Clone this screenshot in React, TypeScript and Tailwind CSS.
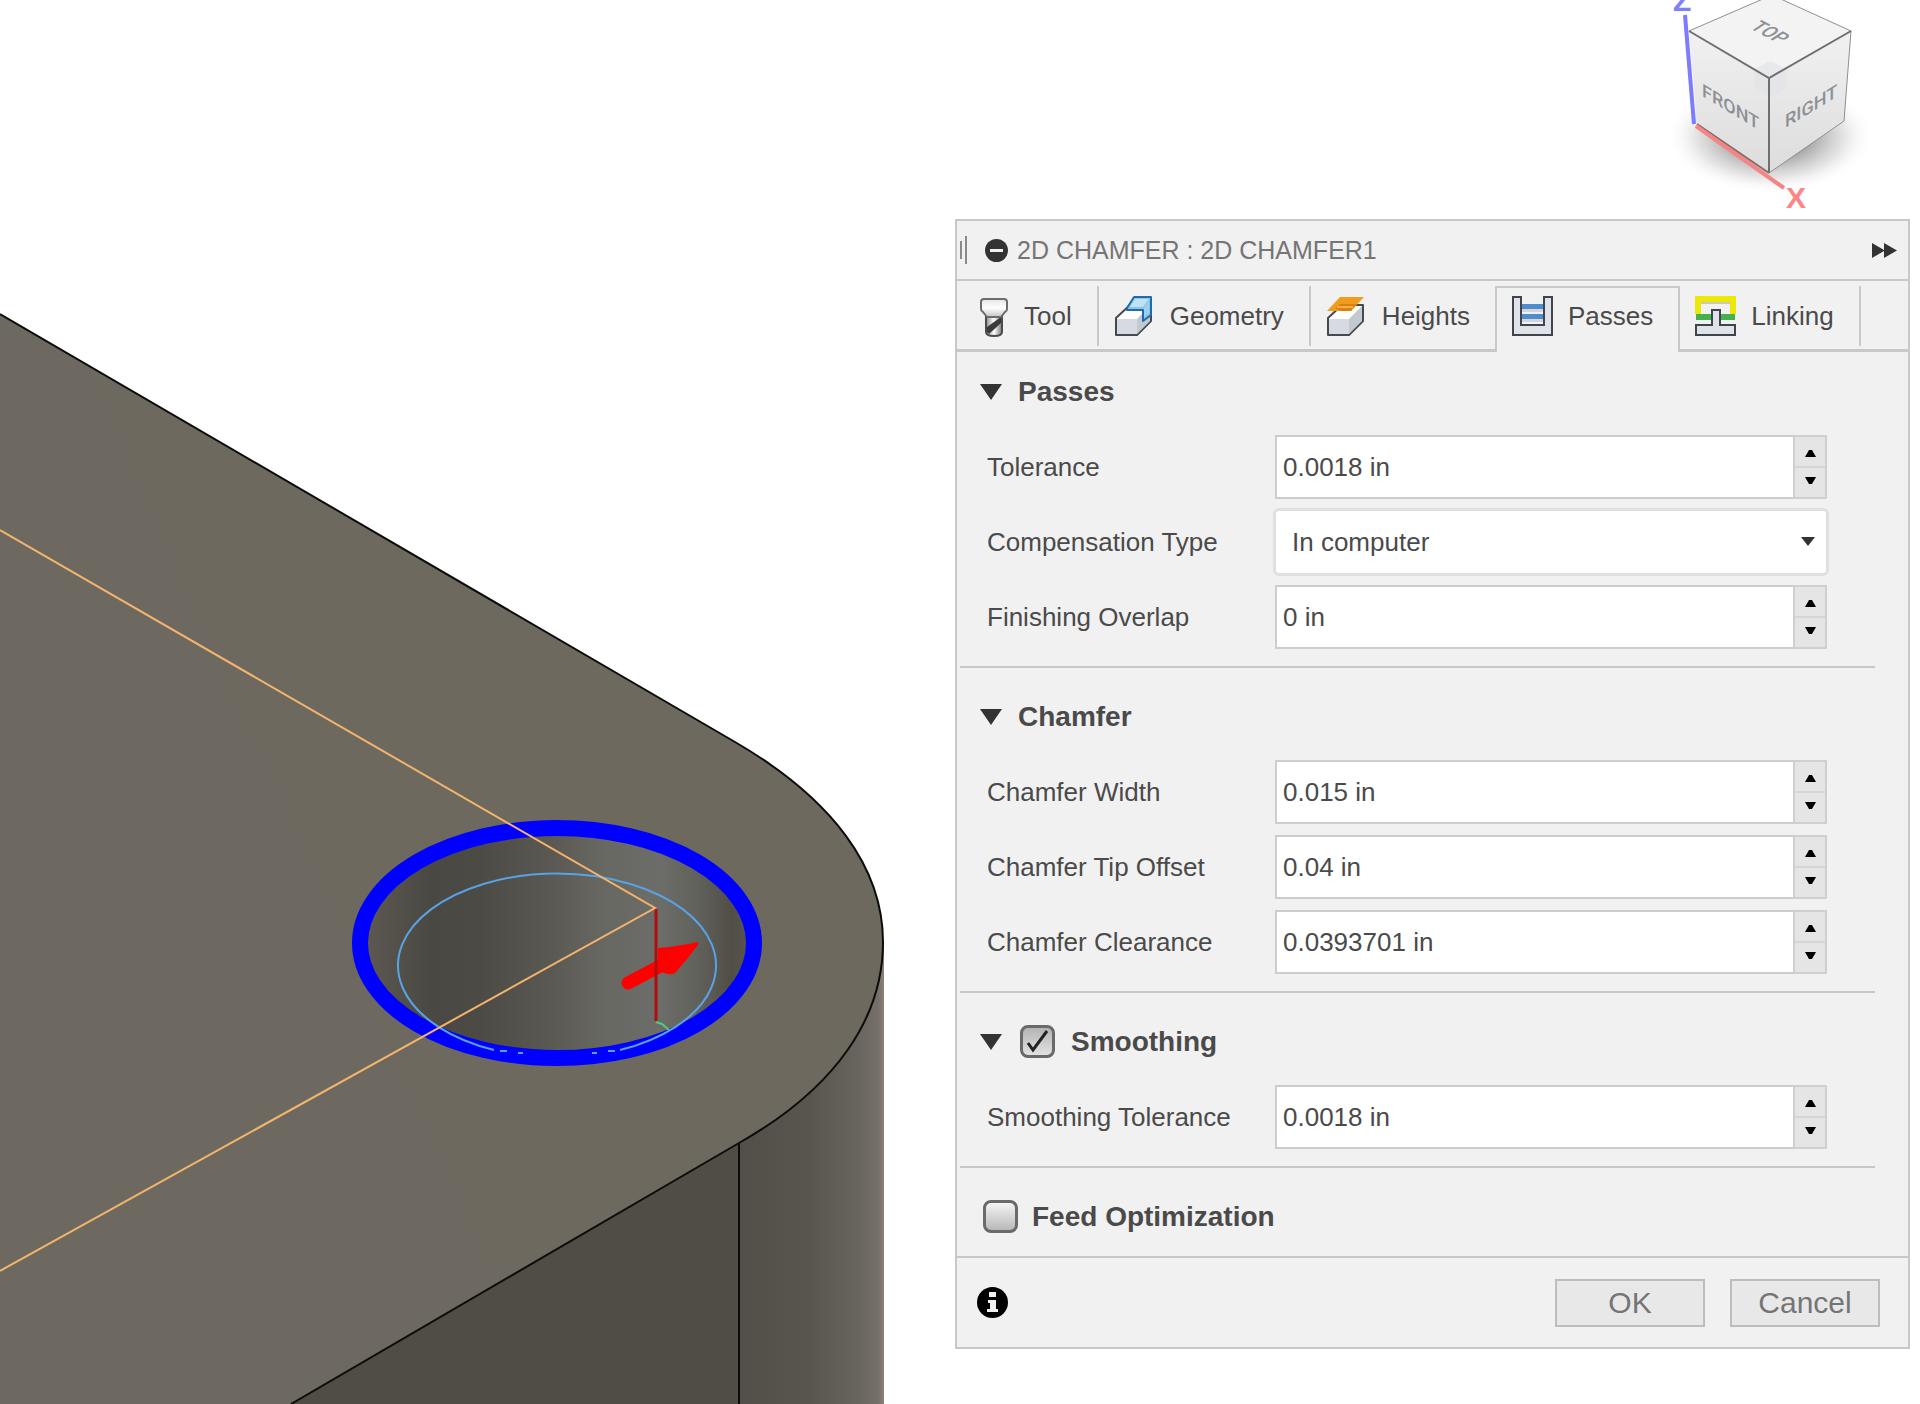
import React, { useState } from 'react';

type NumberRow = { id: string; label: string; value: string };

const PASSES_TOP: NumberRow = { id: 'tolerance', label: 'Tolerance', value: '0.0018 in' };
const PASSES_BOTTOM: NumberRow = { id: 'overlap', label: 'Finishing Overlap', value: '0 in' };

const CHAMFER_ROWS: NumberRow[] = [
  { id: 'width', label: 'Chamfer Width', value: '0.015 in' },
  { id: 'tip-offset', label: 'Chamfer Tip Offset', value: '0.04 in' },
  { id: 'clearance', label: 'Chamfer Clearance', value: '0.0393701 in' },
];

const SMOOTHING_ROW: NumberRow = { id: 'smoothing', label: 'Smoothing Tolerance', value: '0.0018 in' };

// ---------- tab icons, all on a 41x41 grid ----------

const ToolIcon = () => (
  <svg width="41" height="41" viewBox="0 0 41 41" fill="none">
    <defs>
      <linearGradient id="toolHead" x1="0" x2="0" y1="0" y2="1">
        <stop offset="0" stopColor="#e4e4e4" />
        <stop offset="0.5" stopColor="#ffffff" />
        <stop offset="1" stopColor="#c4c4c4" />
      </linearGradient>
      <linearGradient id="toolBody" x1="0" x2="1">
        <stop offset="0" stopColor="#8f8f8f" />
        <stop offset="0.5" stopColor="#ffffff" />
        <stop offset="1" stopColor="#7a7a7a" />
      </linearGradient>
    </defs>
    <path d="M18 19h16v17q0 4-8 4t-8-4z" fill="url(#toolBody)" stroke="#4b4b4b" strokeWidth="2" />
    <path d="M19 31L33 21v6L21 38l-2-2z" fill="#3b3b3b" />
    <path d="M16 3h20q3 0 3 3v7q0 2-2 3l-4 5H19l-4-5q-2-1-2-3V6q0-3 3-3z" fill="url(#toolHead)" stroke="#6c6c6c" strokeWidth="2" />
  </svg>
);

const BlockFaces = () => (
  <>
    <path d="M2 22L16 9h21v16L23 39H2z" fill="#ffffff" stroke="#454a52" strokeWidth="2" strokeLinejoin="round" />
    <path d="M3 23h20v15H3z" fill="#d7dbe1" />
    <path d="M23 23L36 10v15L23 38z" fill="#c3c9d1" />
    <path d="M4 23l13-12h14L20 23z" fill="#ffffff" />
  </>
);

const GeometryIcon = () => (
  <svg width="41" height="41" viewBox="0 0 41 41" fill="none">
    <BlockFaces />
    <path d="M13 12L20 1h17v18l-8 6V14H13z" fill="#8cc4e8" stroke="#1f6cab" strokeWidth="2" strokeLinejoin="round" />
    <path d="M16 11l5-8h14l-6 8z" fill="#bfe2f5" />
    <path d="M30 12l5-7v12l-5 4z" fill="#9fcfee" />
  </svg>
);

const HeightsIcon = () => (
  <svg width="41" height="41" viewBox="0 0 41 41" fill="none">
    <BlockFaces />
    <path d="M1 15L14 1h24L25 15z" fill="#f09c1c" />
    <path d="M9 12L14 8h17l-6 7h-10z" fill="#dd7f0b" />
    <path d="M11 11h16" stroke="#f5b04a" strokeWidth="2" />
  </svg>
);

const PassesIcon = () => (
  <svg width="41" height="41" viewBox="0 0 41 41" fill="none">
    <path d="M9 8h22v5H9zM9 18h22v5H9z" fill="#4f8ccb" />
    <path d="M9 13h22v3H9zM9 23h22v3H9z" fill="#d2d6dc" />
    <path d="M1 1h8v28h23V1h8v38H1z" fill="#dfe3e9" stroke="#3f444d" strokeWidth="2" />
  </svg>
);

const LinkingIcon = () => (
  <svg width="41" height="41" viewBox="0 0 41 41" fill="none">
    <path d="M3 18V3h35v15" stroke="#ece808" strokeWidth="6" />
    <path d="M6 7h29" stroke="#c9c9b4" strokeWidth="2" />
    <path d="M1 21h39" stroke="#45b04c" strokeWidth="6" />
    <path d="M1 39V29h16V14h8v15h15v10z" fill="#dfe3e9" stroke="#3f444d" strokeWidth="2" />
  </svg>
);

const TABS = [
  { name: 'Tool', icon: ToolIcon, box: 'pl-[11px]', inner: 'border-r-2' },
  { name: 'Geometry', icon: GeometryIcon, box: 'pl-[15px]', inner: 'border-r-2' },
  { name: 'Heights', icon: HeightsIcon, box: 'pl-[15px]', inner: '' },
  { name: 'Passes', icon: PassesIcon, box: 'pl-[15px]', inner: '' },
  { name: 'Linking', icon: LinkingIcon, box: 'pl-[15px]', inner: 'border-r-2' },
];

// ---------- form pieces ----------

const Disclosure = () => (
  <svg width="22" height="16" viewBox="0 0 22 16" className="shrink-0">
    <path d="M0 0h22L11 16z" fill="#333333" />
  </svg>
);

const NumberField = ({ row }: { row: NumberRow }) => {
  const [value, setValue] = useState(row.value);

  const nudge = (dir: number) => {
    const next = parseFloat(value) + dir * 0.001;
    if (!Number.isNaN(next)) setValue(`${+next.toFixed(7)} in`);
  };

  return (
    <div className="flex h-[75px] items-center pl-[30px] pr-[81px]">
      <label htmlFor={row.id} className="w-[288px] shrink-0">{row.label}</label>
      <div className="flex h-16 min-w-0 flex-1">
        <input
          id={row.id}
          type="text"
          value={value}
          onChange={(e) => setValue(e.target.value)}
          className="min-w-0 flex-1 border-2 border-r-0 border-[#cdcdcd] bg-white pl-[6px] outline-none"
        />
        <div className="flex w-[34px] flex-col border-2 border-[#cfcfcf] bg-[#e5e5e5]">
          <button aria-label={`Increase ${row.label}`} onClick={() => nudge(1)} className="flex flex-1 items-center justify-center border-b-2 border-[#d6d6d6] pt-1">
            <svg width="11" height="7" viewBox="0 0 11 7"><path d="M4 0h3l4 7H0z" fill="#000000" /></svg>
          </button>
          <button aria-label={`Decrease ${row.label}`} onClick={() => nudge(-1)} className="flex flex-1 items-center justify-center pb-1">
            <svg width="11" height="7" viewBox="0 0 11 7"><path d="M0 0h11L7 7H4z" fill="#000000" /></svg>
          </button>
        </div>
      </div>
    </div>
  );
};

const CheckBox = ({ id, checked, onChange }: { id: string; checked: boolean; onChange: (v: boolean) => void }) => (
  <span className="relative flex h-[33px] w-[35px] shrink-0">
    <input
      id={id}
      type="checkbox"
      checked={checked}
      onChange={(e) => onChange(e.target.checked)}
      className="h-full w-full appearance-none rounded-lg border-3 border-[#6a6a6a] bg-linear-to-b from-[#f4f4f4] to-[#b9b9b9] checked:from-[#b4b4b4] checked:to-[#e2e2e2]"
    />
    {checked && (
      <svg viewBox="0 0 35 33" className="pointer-events-none absolute inset-0" fill="none">
        <path d="M8 18l5 7L27 6" stroke="#222222" strokeWidth="3" />
      </svg>
    )}
  </span>
);

const Divider = () => <hr className="mt-3 mb-[11px] ml-[3px] mr-[33px] border-t-2 border-[#c8c8c8]" />;

const SectionTitle = ({ children }: { children: React.ReactNode }) => (
  <h2 className="flex h-[75px] items-center gap-4 pl-[23px] text-[28px] font-bold">
    <Disclosure />
    {children}
  </h2>
);

// ---------- 3D view ----------

const ModelView = () => (
  <svg viewBox="0 0 955 1404" className="block h-auto w-full" fill="none">
    <defs>
      <linearGradient id="sideRound" gradientUnits="userSpaceOnUse" x1="739" x2="885" y1="0" y2="0">
        <stop offset="0" stopColor="#524f48" />
        <stop offset="0.5" stopColor="#595650" />
        <stop offset="0.8" stopColor="#67645e" />
        <stop offset="0.95" stopColor="#756f67" />
        <stop offset="1" stopColor="#8d857b" />
      </linearGradient>
      <linearGradient id="topFace" gradientUnits="userSpaceOnUse" x1="100" x2="420" y1="760" y2="620">
        <stop offset="0" stopColor="#6d6961" />
        <stop offset="1" stopColor="#6d695e" />
      </linearGradient>
      <linearGradient id="bore" gradientUnits="userSpaceOnUse" x1="360" x2="755" y1="0" y2="0">
        <stop offset="0" stopColor="#5d5a53" />
        <stop offset="0.18" stopColor="#4a4842" />
        <stop offset="0.3" stopColor="#4c4a44" />
        <stop offset="0.48" stopColor="#5a5852" />
        <stop offset="0.62" stopColor="#686863" />
        <stop offset="0.76" stopColor="#6c6d68" />
        <stop offset="0.85" stopColor="#62625c" />
        <stop offset="0.94" stopColor="#504e47" />
        <stop offset="1" stopColor="#5a574f" />
      </linearGradient>
    </defs>

    {/* block */}
    <path d="M291 1404L739 1143V1404z" fill="#504d45" />
    <path d="M739 1143L884 940V1404H739z" fill="url(#sideRound)" />
    <path d="M0 314L735 742C833 799 883 868 883 942S838 1087 739 1143L291 1404H0z" fill="url(#topFace)" />
    <path d="M0 314L735 742C833 799 883 868 883 942S838 1087 739 1143L291 1404M739 1143V1404" stroke="#0c0c0a" strokeWidth="2" />

    {/* hole and the selected edge */}
    <ellipse cx="557" cy="943" rx="197" ry="115" fill="url(#bore)" stroke="#0000ff" strokeWidth="16" />
    <path d="M494 1050A159 92 0 1 1 620 1050" stroke="#57a3e6" strokeWidth="2" />
    <path d="M500 1051h7M518 1053h5M592 1053h5M608 1051h7" stroke="#57a3e6" strokeWidth="2" />

    {/* toolpath */}
    <path d="M628 983L662 965" stroke="#ff0000" strokeWidth="13" strokeLinecap="round" />
    <path d="M658 948Q680 946 697 942Q700 943 697 946Q687 960 675 973Q671 976 658 971z" fill="#ff0000" />
    <path d="M656 909V1021" stroke="#b00d12" strokeWidth="3" />
    <path d="M656 1022l6 2 7 6" stroke="#56c877" strokeWidth="2" />
    <path d="M0 530L655 908L0 1271" stroke="#f5b46c" strokeWidth="2" />
  </svg>
);

const ViewCube = () => (
  <svg width="220" height="219" viewBox="0 0 220 219" className="mr-[30px] self-end" role="img" aria-label="View cube">
    <defs>
      <radialGradient id="cubeShadow">
        <stop offset="0.3" stopColor="#8f8f8f" />
        <stop offset="0.7" stopColor="#cfcfcf" stopOpacity="0.6" />
        <stop offset="1" stopColor="#ffffff" stopOpacity="0" />
      </radialGradient>
      <linearGradient id="cubeSide" x1="0" x2="0" y1="0" y2="1">
        <stop offset="0" stopColor="#f1f1f1" />
        <stop offset="1" stopColor="#dcdcdc" />
      </linearGradient>
    </defs>
    <ellipse cx="110" cy="136" rx="104" ry="58" fill="url(#cubeShadow)" />
    <path d="M29 31L109 78V173L37 124z" fill="url(#cubeSide)" />
    <path d="M191 31L109 78V173L184 121z" fill="url(#cubeSide)" />
    <path d="M29 31L112 -5L191 31L109 78z" fill="#f3f3f3" />
    <path d="M94 69l16-8 17 8v19l-17 9-16-9z" fill="#dfe3e8" opacity="0.6" />
    <path d="M29 31L112 -5L191 31M191 31L184 121L109 173" fill="none" stroke="#8f8f8f" strokeWidth="1" />
    <path d="M29 31L109 78L191 31M109 78V173" fill="none" stroke="#6f6f6f" strokeWidth="2" />
    <path d="M25 15L34 124" stroke="#7c7cff" strokeWidth="4" />
    <path d="M37 124L109 173" stroke="#8a6a6a" strokeWidth="2" />
    <path d="M36 126L124 188" stroke="#f58484" strokeWidth="4" />
    <g fontFamily="Roboto, sans-serif" fontSize="18" fill="#8d9195" fontWeight="500">
      <text transform="translate(42 96) skewY(31)">FRONT</text>
      <text transform="translate(125 128) skewY(-31)">RIGHT</text>
      <text transform="translate(89 28) rotate(28) skewX(-28)">TOP</text>
    </g>
    <text x="13" y="11" fontFamily="Liberation Sans, sans-serif" fontSize="30" fontWeight="bold" fill="#8080ff">Z</text>
    <text x="126" y="208" fontFamily="Liberation Sans, sans-serif" fontSize="30" fontWeight="bold" fill="#ff8585">X</text>
  </svg>
);

export default function App() {
  const [tab, setTab] = useState('Passes');
  const [smoothing, setSmoothing] = useState(true);
  const [feed, setFeed] = useState(false);

  return (
    <main className="grid min-h-screen grid-cols-[955fr_965fr] items-start overflow-hidden bg-white font-['Liberation_Sans',Arial,sans-serif] text-[26px] leading-8 text-[#4a4a4a]">
      <ModelView />

      <div className="flex flex-col pr-2.5">
        <ViewCube />

        <section className="border-2 border-[#c8c8c8] bg-[#f1f1f1]">
          <header className="flex h-[60px] items-center border-b-2 border-[#c8c8c8] pl-[3px] pr-[11px] text-[25px] text-[#757575]">
            <svg width="7" height="28" viewBox="0 0 7 28">
              <path d="M1 5v18M6 0v28" stroke="#8a8a8a" strokeWidth="2" />
            </svg>
            <button aria-label="Collapse" className="ml-[18px]">
              <svg width="23" height="23" viewBox="0 0 23 23">
                <circle cx="11.500" cy="11.500" r="11.500" fill="#333333" />
                <path d="M5 11.500h13" stroke="#f1f1f1" strokeWidth="3" />
              </svg>
            </button>
            <h1 className="ml-[9px]">2D CHAMFER : 2D CHAMFER1</h1>
            <button aria-label="Dock" className="ml-auto">
              <svg width="25" height="15" viewBox="0 0 25 15">
                <path d="M0 0l12 7V0l13 7.500L12 15V8L0 15z" fill="#333333" />
              </svg>
            </button>
          </header>

          <nav role="tablist" className="flex pt-[5px]">
            {TABS.map(({ name, icon: Icon, box, inner }) => (
              <button
                key={name}
                role="tab"
                aria-selected={tab === name}
                onClick={() => setTab(name)}
                className={`flex h-[66px] items-start border-[#c8c8c8] ${box} ${tab === name ? 'border-x-2 border-t-2' : 'border-b-3'}`}
              >
                <span className={`flex items-center gap-[15px] border-[#c8c8c8] pr-[25px] ${inner} ${tab === name ? 'h-14' : 'h-[60px]'}`}>
                  <Icon />
                  {name}
                </span>
              </button>
            ))}
            <span className="flex-1 border-b-3 border-[#c8c8c8]" />
          </nav>

          <div className="py-0.5">
            <SectionTitle>Passes</SectionTitle>
            <NumberField row={PASSES_TOP} />
            <div className="flex h-[75px] items-center pl-[30px] pr-[79px]">
              <label htmlFor="compensation" className="w-[286px] shrink-0">Compensation Type</label>
              <div className="relative flex h-[68px] flex-1">
                <select
                  id="compensation"
                  defaultValue="In computer"
                  className="w-full appearance-none rounded-md border-3 border-[#e0e0e0] bg-white pl-4 outline-none"
                >
                  <option>In computer</option>
                  <option>In control</option>
                  <option>Wear</option>
                  <option>Inverse wear</option>
                  <option>Off</option>
                </select>
                <svg width="14" height="9" viewBox="0 0 14 9" className="pointer-events-none absolute top-[29px] right-[14px]">
                  <path d="M0 0h14L7 9z" fill="#333333" />
                </svg>
              </div>
            </div>
            <NumberField row={PASSES_BOTTOM} />
            <Divider />

            <SectionTitle>Chamfer</SectionTitle>
            {CHAMFER_ROWS.map((row) => (
              <NumberField key={row.id} row={row} />
            ))}
            <Divider />

            <SectionTitle>
              <span className="flex items-center gap-4 pl-[2px]">
                <CheckBox id="smoothing-on" checked={smoothing} onChange={setSmoothing} />
                <label htmlFor="smoothing-on">Smoothing</label>
              </span>
            </SectionTitle>
            <NumberField row={SMOOTHING_ROW} />
            <Divider />

            <div className="flex h-[75px] items-center gap-[14px] pl-[26px] text-[28px] font-bold">
              <CheckBox id="feed-on" checked={feed} onChange={setFeed} />
              <label htmlFor="feed-on">Feed Optimization</label>
            </div>
          </div>

          <footer className="flex h-[91px] items-center gap-[25px] border-t-2 border-[#c8c8c8] pl-5 pr-7 text-[30px] text-[#757575]">
            <button aria-label="Info" className="mr-auto">
              <svg width="31" height="31" viewBox="0 0 31 31">
                <circle cx="15.500" cy="15.500" r="15.500" fill="#000000" />
                <path d="M12 5h7v5h-7zM11 13h8v9h2v3H10v-3h3v-6h-2z" fill="#f1f1f1" />
              </svg>
            </button>
            <button className="h-12 w-[150px] border-2 border-[#bdbdbd] bg-[#e8e8e8]">OK</button>
            <button className="h-12 w-[150px] border-2 border-[#bdbdbd] bg-[#e8e8e8]">Cancel</button>
          </footer>
        </section>
      </div>
    </main>
  );
}
